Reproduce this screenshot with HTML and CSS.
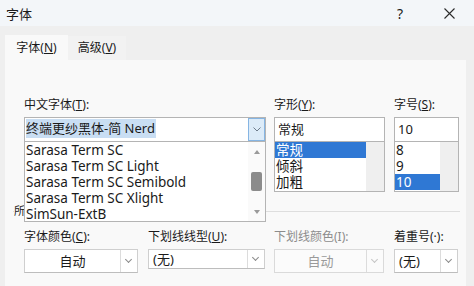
FILE: index.html
```html
<!DOCTYPE html>
<html lang="zh-CN">
<head>
    <meta charset="UTF-8">
    <title>字体</title>
    <link rel="stylesheet" href="styles.css">
</head>
<body>
    <div class="titlebar">
        <span class="title">字体</span>
        <span class="tbtn help">?</span>
        <span class="tbtn close">
            <svg width="11" height="11" viewBox="0 0 11 11"><path d="M0.5 0.5L10.5 10.5M10.5 0.5L0.5 10.5" stroke="#2b2b2b" stroke-width="1.1" fill="none"/></svg>
        </span>
    </div>
    <div class="tabs">
        <div class="tab active">字体(<u>N</u>)</div>
        <div class="tab">高级(<u>V</u>)</div>
    </div>
    <div class="panel">
        <div class="top-row">
            <div class="col col-font">
                <div class="label">中文字体(<u>T</u>):</div>
                <div class="input combo-edit">
                    <span class="sel-text">终端更纱黑体-简 Nerd</span>
                    <span class="drop-btn">
                        <svg width="8" height="5" viewBox="0 0 8 5"><path d="M0.5 0.5L4 4L7.5 0.5" stroke="#6d7b8a" fill="none"/></svg>
                    </span>
                </div>
                <div class="list list-font">
                    <div class="items">
                        <div class="item">Sarasa Term SC</div>
                        <div class="item">Sarasa Term SC Light</div>
                        <div class="item">Sarasa Term SC Semibold</div>
                        <div class="item">Sarasa Term SC Xlight</div>
                        <div class="item">SimSun-ExtB</div>
                    </div>
                    <div class="scrollbar">
                        <span class="arrow up"></span>
                        <span class="thumb"></span>
                        <span class="arrow down"></span>
                    </div>
                </div>
            </div>
            <div class="col col-style">
                <div class="label">字形(<u>Y</u>):</div>
                <div class="input">常规</div>
                <div class="list list-short">
                    <div class="items">
                        <div class="item selected">常规</div>
                        <div class="item">倾斜</div>
                        <div class="item">加粗</div>
                    </div>
                    <div class="track"></div>
                </div>
            </div>
            <div class="col col-size">
                <div class="label">字号(<u>S</u>):</div>
                <div class="input">10</div>
                <div class="list list-short">
                    <div class="items">
                        <div class="item">8</div>
                        <div class="item">9</div>
                        <div class="item selected">10</div>
                    </div>
                    <div class="track"></div>
                </div>
            </div>
        </div>
        <div class="group">
            <!-- rest of the caption is covered by the font list -->
            <span class="legend">所</span>
            <div class="bottom-row">
                <div class="field f-color">
                    <div class="label">字体颜色(<u>C</u>):</div>
                    <div class="combo center"><span class="val">自动</span><span class="arr"></span></div>
                </div>
                <div class="field f-line">
                    <div class="label">下划线线型(<u>U</u>):</div>
                    <div class="combo short"><span class="val">(无)</span><span class="arr"></span></div>
                </div>
                <div class="field f-linecolor disabled">
                    <div class="label">下划线颜色(I):</div>
                    <div class="combo center"><span class="val">自动</span><span class="arr"></span></div>
                </div>
                <div class="field f-emph">
                    <div class="label">着重号(·):</div>
                    <div class="combo"><span class="val">(无)</span><span class="arr"></span></div>
                </div>
            </div>
        </div>
    </div>
</body>
</html>
```

FILE: styles.css
```css
body {
    margin: 0;
    width: 474px;
    height: 286px;
    overflow: hidden;
    background-color: #efefef;
    font-family: "Noto Sans", "Noto Sans CJK SC", sans-serif;
    color: #1a1a1a;
}
u {
    text-decoration: underline;
    text-underline-offset: 1px;
}
.titlebar {
    height: 26px;
    background-color: #f3f6f9;
    display: flex;
    align-items: center;
}
.title {
    padding-left: 6px;
    font-size: 13px;
    flex: 1;
}
.tbtn {
    width: 46px;
    height: 26px;
    display: flex;
    align-items: center;
    justify-content: center;
}
.help {
    font-size: 14px;
    margin-right: 3px;
}
.close {
    margin-right: 2px;
}
.tabs {
    height: 34px;
    padding-left: 5px;
    display: flex;
    align-items: flex-end;
}
.tab {
    height: 24px;
    width: 58px;
    font-size: 12px;
    line-height: 24px;
    text-align: center;
    background-color: #f2f2f2;
}
.tab.active {
    height: 25px;
    width: 63px;
    line-height: 26px;
    background-color: #f9f9f9;
}
.panel {
    margin-left: 5px;
    width: 461px;
    height: 226px;
    background-color: #f9f9f9;
    padding: 37px 0 0 19px;
    box-sizing: border-box;
}
.top-row {
    display: flex;
    position: relative;
    z-index: 1;
}
.label {
    font-size: 12px;
    line-height: 16px;
    height: 16px;
    margin-bottom: 4px;
    white-space: nowrap;
}
.col-font {
    width: 242px;
}
.col-style {
    width: 111px;
    margin-left: 8px;
}
.col-size {
    width: 65px;
    margin-left: 9px;
}
.input {
    height: 25px;
    box-sizing: border-box;
    border: 1px solid #b4b4b4;
    background-color: #fff;
    font-size: 13px;
    line-height: 23px;
    padding-left: 3px;
}
.combo-edit {
    display: flex;
    padding-left: 1px;
}
.sel-text {
    background-color: #c9def3;
    line-height: 19px;
    height: 19px;
    margin-top: 1px;
    padding-right: 1px;
    flex: none;
}
.drop-btn {
    margin-left: auto;
    width: 17px;
    height: 23px;
    box-sizing: border-box;
    border: 1px solid #86b5e3;
    background-color: #dcebf8;
    display: flex;
    align-items: center;
    justify-content: center;
}
.list {
    display: flex;
    border: 1px solid #b4b4b4;
    border-top: none;
    background-color: #fff;
    box-sizing: border-box;
}
.list-font {
    height: 80px;
}
.list-short {
    height: 50px;
}
.items {
    flex: 1;
    min-width: 0;
}
.item {
    height: 16px;
    line-height: 16px;
    font-size: 13.5px;
    padding-left: 1px;
    white-space: nowrap;
}
.item.selected {
    background-color: #2f78d4;
    color: #fff;
}
.track {
    width: 18px;
    background-color: #efefef;
}
.scrollbar {
    width: 17px;
    background-color: #fafafa;
    display: flex;
    flex-direction: column;
    align-items: center;
}
.arrow {
    width: 0;
    height: 0;
    border-left: 3px solid transparent;
    border-right: 3px solid transparent;
}
.arrow.up {
    margin-top: 8px;
    border-bottom: 4px solid #9a9a9a;
}
.thumb {
    margin-top: 18px;
    width: 11px;
    height: 19px;
    border-radius: 2px;
    background-color: #8b8b8b;
}
.arrow.down {
    margin-top: 19px;
    border-top: 4px solid #9a9a9a;
}
.group {
    position: relative;
    margin: -11px 0 0 -11px;
    width: 447px;
    border-top: 1px solid #dedede;
    padding: 17px 0 0 11px;
    box-sizing: border-box;
}
.legend {
    position: absolute;
    top: -9px;
    left: 1px;
    font-size: 11px;
    line-height: 16px;
    background-color: #f9f9f9;
}
.bottom-row {
    display: flex;
}
.f-color {
    width: 114px;
}
.f-line {
    width: 117px;
    margin-left: 10px;
}
.f-linecolor {
    width: 110px;
    margin-left: 9px;
}
.f-emph {
    width: 64px;
    margin-left: 10px;
}
.combo {
    height: 24px;
    box-sizing: border-box;
    border: 1px solid #cfcfcf;
    border-bottom-color: #bdbdbd;
    background-color: #fff;
    display: flex;
    font-size: 13px;
    line-height: 22px;
}
.combo.short {
    height: 20px;
    line-height: 18px;
}
.combo .val {
    flex: 1;
    padding-left: 4px;
}
.combo.center .val {
    text-align: center;
    padding-left: 0;
}
.combo .arr {
    width: 16px;
    border-left: 1px solid #dcdcdc;
    position: relative;
}
.combo .arr::after {
    content: "";
    position: absolute;
    left: 5px;
    top: 50%;
    width: 4px;
    height: 4px;
    margin-top: -4px;
    border-right: 1px solid #8a8a8a;
    border-bottom: 1px solid #8a8a8a;
    transform: rotate(45deg);
}
.disabled .label {
    color: #8c8c8c;
}
.disabled .combo {
    background-color: #fbfbfb;
    border-color: #dadada;
    color: #9a9a9a;
}
.disabled .combo .arr::after {
    border-color: #c4c4c4;
}
```
